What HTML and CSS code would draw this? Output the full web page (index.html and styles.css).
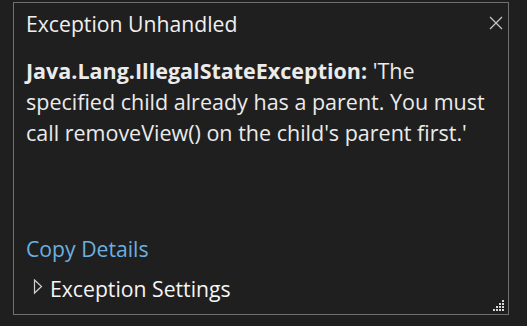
FILE: index.html
```html
<!DOCTYPE html>
<html>
<head>
<meta charset="utf-8">
<link rel="stylesheet" href="styles.css">
</head>
<body>
<div class="popup">
  <div class="header">
    <div class="title">Exception Unhandled</div>
    <svg class="close" width="14" height="14" viewBox="0 0 14 14"><path d="M1 1L13 13M13 1L1 13" stroke="#c5c5c5" stroke-width="1.3" fill="none"/></svg>
  </div>
  <div class="message"><b>Java.Lang.IllegalStateException:</b> 'The<br>specified child already has a parent. You must<br>call removeView() on the child's parent first.'</div>
  <div class="spacer"></div>
  <div class="link">Copy Details</div>
  <div class="settings">
    <svg class="tri" width="10" height="16" viewBox="0 0 10 16"><path d="M1.5 1L8.5 7.5L1.5 14Z" stroke="#d0d0d0" stroke-width="1.2" fill="none" stroke-linejoin="miter"/></svg>
    <span>Exception Settings</span>
  </div>
  <svg class="grip" width="12" height="12" viewBox="0 0 12 12" fill="#d8d8d8">
    <rect x="9" y="0" width="2" height="2"/>
    <rect x="9" y="3" width="2" height="2"/>
    <rect x="6" y="3" width="2" height="2"/>
    <rect x="9" y="6" width="2" height="2"/>
    <rect x="6" y="6" width="2" height="2"/>
    <rect x="3" y="6" width="2" height="2"/>
    <rect x="9" y="9" width="2" height="2"/>
    <rect x="6" y="9" width="2" height="2"/>
    <rect x="3" y="9" width="2" height="2"/>
    <rect x="0" y="9" width="2" height="2"/>
  </svg>
</div>
</body>
</html>
```
FILE: styles.css
```css
html, body {
  margin: 0;
  padding: 0;
  background: #1f1f1f;
}
body {
  width: 527px;
  height: 326px;
  overflow: hidden;
  font-family: "Open Sans", "Noto Sans", sans-serif;
  color: #f0f0f0;
}
.popup {
  position: relative;
  box-sizing: border-box;
  margin: 2px 0 0 13px;
  width: 496px;
  height: 313px;
  border: 1px solid #707070;
  padding: 7px 12px 0 12px;
  display: flex;
  flex-direction: column;
}
.header {
  display: flex;
  justify-content: space-between;
  align-items: flex-start;
}
.title {
  font-size: 21.2px;
  line-height: 28px;
}
.close {
  margin-top: 6px;
  margin-right: -7px;
}
.message {
  margin-top: 17px;
  font-size: 21.5px;
  line-height: 31px;
  color: #ebebeb;
  white-space: nowrap;
}
.message b {
  font-weight: 700;
}
.spacer {
  flex: 1;
}
.link {
  font-size: 21.2px;
  line-height: 28px;
  color: #6ab0e0;
}
.settings {
  margin-top: 12px;
  margin-bottom: 11px;
  display: flex;
  align-items: flex-start;
  gap: 7px;
  font-size: 21.2px;
  line-height: 28px;
  color: #f5f5f5;
}
.tri {
  margin-left: 7px;
  margin-top: 4px;
}
.grip {
  position: absolute;
  right: 3px;
  bottom: 2px;
}
```
